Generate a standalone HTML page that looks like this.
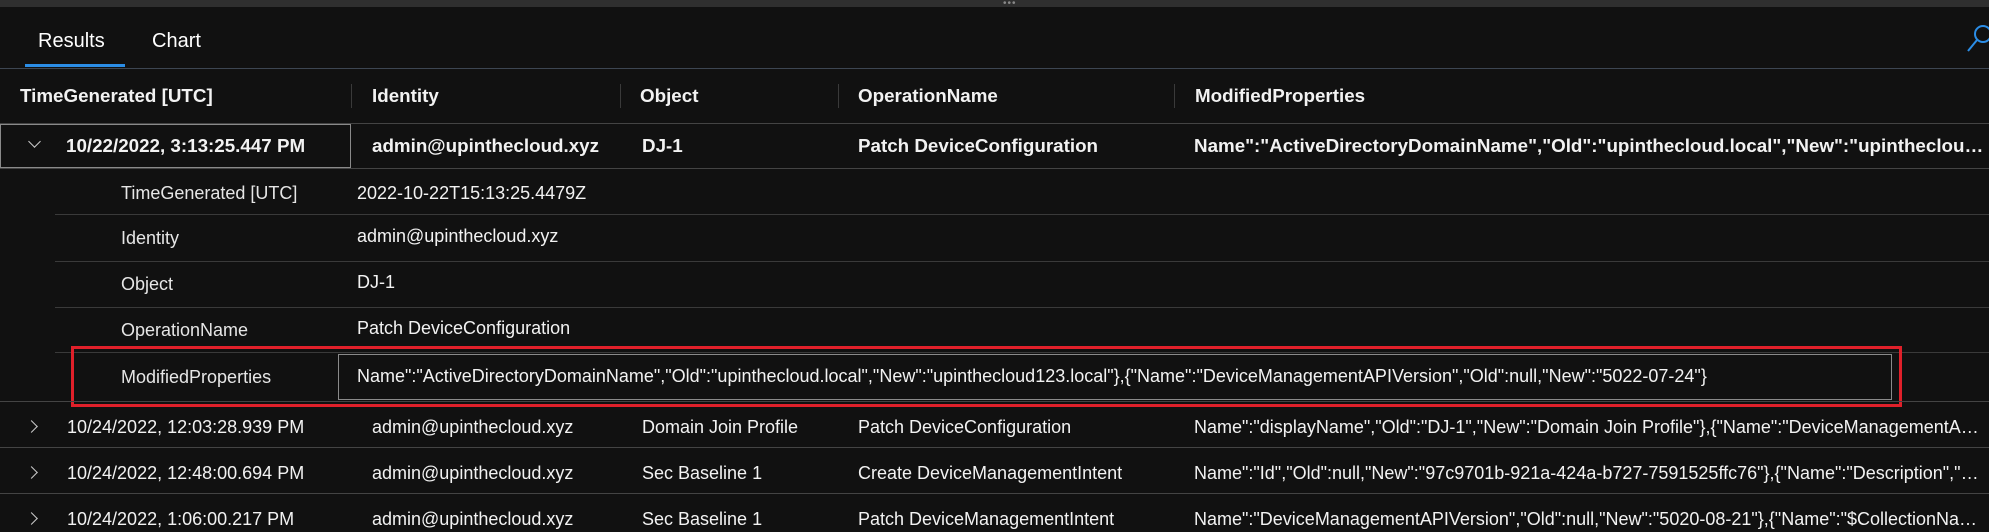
<!DOCTYPE html>
<html><head><meta charset="utf-8"><style>
html,body{margin:0;padding:0;background:#111;width:1989px;height:532px;overflow:hidden;font-family:"Liberation Sans",sans-serif;color:#f2f2f2}
.a{position:absolute;white-space:nowrap}
.t{font-size:18px;line-height:20px}
.hl{position:absolute;height:1px;background:#3a3a3a}
.dv{position:absolute;width:1px;top:84px;height:24px;background:#3a3a3a}
.b{font-weight:bold;font-size:18.8px}
.mp{position:absolute;left:1194px;width:791px;overflow:hidden;text-overflow:ellipsis;white-space:nowrap}
.chev{position:absolute;width:8px;height:8px;border-right:1.4px solid #ccc;border-bottom:1.4px solid #ccc}
</style></head><body>
<div class="a" style="left:0;top:0;width:1989px;height:7px;background:#2f2f2f"></div>
<div class="a" style="left:1003px;top:1px;color:#888;font-size:10px;line-height:6px;letter-spacing:1px">•••</div>

<div class="a" style="left:38px;top:29px;font-size:20px;line-height:24px;color:#fff">Results</div>
<div class="a" style="left:152px;top:29px;font-size:20px;line-height:24px;color:#fff">Chart</div>
<div class="a" style="left:25px;top:64px;width:100px;height:3px;background:#2b8de6"></div>
<div class="hl" style="left:0;top:68px;width:1989px;background:#3d4652"></div>
<svg class="a" style="left:1962px;top:22px" width="27" height="32"><circle cx="21" cy="12" r="8" fill="none" stroke="#2b8de6" stroke-width="2"/><line x1="15" y1="18" x2="6" y2="29" stroke="#2b8de6" stroke-width="2"/></svg>

<div class="a t b" style="left:20px;top:86px">TimeGenerated [UTC]</div>
<div class="a t b" style="left:372px;top:86px">Identity</div>
<div class="a t b" style="left:640px;top:86px">Object</div>
<div class="a t b" style="left:858px;top:86px">OperationName</div>
<div class="a t b" style="left:1195px;top:86px">ModifiedProperties</div>
<div class="dv" style="left:351px"></div><div class="dv" style="left:620px"></div><div class="dv" style="left:838px"></div><div class="dv" style="left:1174px"></div>
<div class="hl" style="left:0;top:123px;width:1989px;background:#444"></div>

<!-- row 1 -->
<div class="a" style="left:0;top:124px;width:349px;height:42px;border:1px solid #8a8a8a"></div>
<div class="chev" style="left:30px;top:137px;transform:rotate(45deg)"></div>
<div class="a t b" style="left:66px;top:136px">10/22/2022, 3:13:25.447 PM</div>
<div class="a t b" style="left:372px;top:136px">admin@upinthecloud.xyz</div>
<div class="a t b" style="left:642px;top:136px">DJ-1</div>
<div class="a t b" style="left:858px;top:136px">Patch DeviceConfiguration</div>
<div class="mp t b" style="top:136px">Name":"ActiveDirectoryDomainName","Old":"upinthecloud.local","New":"upinthecloud123.local"},{"Name":"DeviceManagementAPIVersion"</div>
<div class="hl" style="left:0;top:168px;width:1989px;background:#444"></div>

<!-- details -->
<div class="a t" style="left:121px;top:183px;color:#e6e6e6">TimeGenerated [UTC]</div>
<div class="a t" style="left:357px;top:183px">2022-10-22T15:13:25.4479Z</div>
<div class="hl" style="left:55px;top:214px;width:1934px"></div>
<div class="a t" style="left:121px;top:228px;color:#e6e6e6">Identity</div>
<div class="a t" style="left:357px;top:226px">admin@upinthecloud.xyz</div>
<div class="hl" style="left:55px;top:261px;width:1934px"></div>
<div class="a t" style="left:121px;top:274px;color:#e6e6e6">Object</div>
<div class="a t" style="left:357px;top:272px">DJ-1</div>
<div class="hl" style="left:55px;top:307px;width:1934px"></div>
<div class="a t" style="left:121px;top:320px;color:#e6e6e6">OperationName</div>
<div class="a t" style="left:357px;top:318px">Patch DeviceConfiguration</div>
<div class="hl" style="left:55px;top:352px;width:1934px"></div>
<div class="a" style="left:338px;top:354px;width:1552px;height:44px;border:1px solid #8a8a8a"></div>
<div class="a t" style="left:121px;top:367px;color:#e6e6e6">ModifiedProperties</div>
<div class="a t" style="left:357px;top:366px">Name":"ActiveDirectoryDomainName","Old":"upinthecloud.local","New":"upinthecloud123.local"},{"Name":"DeviceManagementAPIVersion","Old":null,"New":"5022-07-24"}</div>
<div class="a" style="left:71px;top:346px;width:1825px;height:55px;border:3px solid #e0202a"></div>
<div class="hl" style="left:0;top:401px;width:1989px;background:#444"></div>

<!-- rows -->
<div class="chev" style="left:27px;top:422px;transform:rotate(-45deg)"></div>
<div class="a t" style="left:67px;top:417px">10/24/2022, 12:03:28.939 PM</div>
<div class="a t" style="left:372px;top:417px">admin@upinthecloud.xyz</div>
<div class="a t" style="left:642px;top:417px">Domain Join Profile</div>
<div class="a t" style="left:858px;top:417px">Patch DeviceConfiguration</div>
<div class="mp t" style="top:417px">Name":"displayName","Old":"DJ-1","New":"Domain Join Profile"},{"Name":"DeviceManagementAPIVersion"</div>
<div class="hl" style="left:0;top:447px;width:1989px;background:#444"></div>

<div class="chev" style="left:27px;top:468px;transform:rotate(-45deg)"></div>
<div class="a t" style="left:67px;top:463px">10/24/2022, 12:48:00.694 PM</div>
<div class="a t" style="left:372px;top:463px">admin@upinthecloud.xyz</div>
<div class="a t" style="left:642px;top:463px">Sec Baseline 1</div>
<div class="a t" style="left:858px;top:463px">Create DeviceManagementIntent</div>
<div class="mp t" style="top:463px">Name":"Id","Old":null,"New":"97c9701b-921a-424a-b727-7591525ffc76"},{"Name":"Description","Old":null,"New":""}</div>
<div class="hl" style="left:0;top:493px;width:1989px;background:#444"></div>

<div class="chev" style="left:27px;top:514px;transform:rotate(-45deg)"></div>
<div class="a t" style="left:67px;top:509px">10/24/2022, 1:06:00.217 PM</div>
<div class="a t" style="left:372px;top:509px">admin@upinthecloud.xyz</div>
<div class="a t" style="left:642px;top:509px">Sec Baseline 1</div>
<div class="a t" style="left:858px;top:509px">Patch DeviceManagementIntent</div>
<div class="mp t" style="top:509px">Name":"DeviceManagementAPIVersion","Old":null,"New":"5020-08-21"},{"Name":"$CollectionName","Old":null}</div>
</body></html>
